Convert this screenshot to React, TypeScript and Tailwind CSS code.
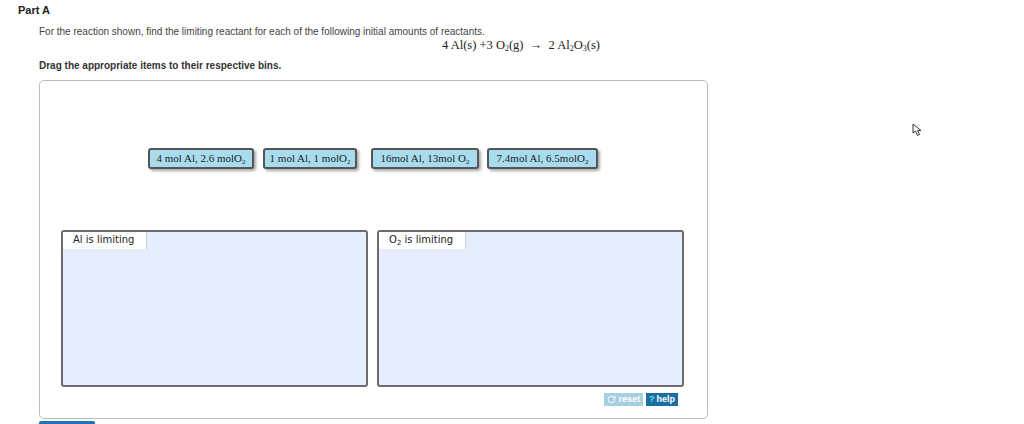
import { RotateCw } from "lucide-react";

const serif = "font-['Liberation_Serif','DejaVu_Serif',serif]";

const items = [
  { key: "a", el: <>4 mol Al, 2.6 molO<sub className="text-[7px]">2</sub></>, cls: "w-[106px]" },
  { key: "b", el: <>1 mol Al, 1 molO<sub className="text-[7px]">2</sub></>, cls: "ml-[9px] w-[94px]" },
  { key: "c", el: <>16mol Al, 13mol O<sub className="text-[7px]">2</sub></>, cls: "ml-[14px] w-[108px]" },
  { key: "d", el: <>7.4mol Al, 6.5molO<sub className="text-[7px]">2</sub></>, cls: "ml-[8px] w-[111px]" },
];

function Bin({ label }: { label: React.ReactNode }) {
  return (
    <div className="h-[157px] flex-1 rounded-[3px] border-2 border-[#6b6b6b] bg-[#e6edfc]">
      <div className="w-fit border-r border-[#cfcfcf] bg-white pb-[2px] pl-[10px] pr-[12px] pt-[1px] text-[10px] leading-[14px] text-[#222] font-['DejaVu_Sans',sans-serif]">
        {label}
      </div>
    </div>
  );
}

export default function App() {
  return (
    <div className="relative h-[424px] w-[1024px] overflow-hidden bg-white font-['Liberation_Sans',Arial,sans-serif] text-[#333]">
      <div className="pl-[18px] pt-[4px] text-[11px] font-bold leading-[12px] text-[#222]">Part A</div>

      <div className="pl-[39px] pt-[10px]">
        <p className="text-[10px] leading-[12px] text-[#444]">
          For the reaction shown, find the limiting reactant for each of the following initial amounts of reactants.
        </p>
        <p className={`ml-[403px] text-[12.5px] leading-[14px] text-[#222] ${serif}`}>
          4 Al(s) +3 O<sub className="text-[8px]">2</sub>(g) &nbsp;→&nbsp; 2 Al<sub className="text-[8px]">2</sub>O<sub className="text-[8px]">3</sub>(s)
        </p>
        <p className="mt-[8px] text-[10px] font-bold leading-[12px] text-[#333]">Drag the appropriate items to their respective bins.</p>

        <div className="mt-[8px] flex h-[339px] w-[669px] flex-col rounded-[5px] border border-[#bdbdbd] px-[21px] pt-[67px]">
          <div className="flex pl-[87px]">
            {items.map((it) => (
              <div
                key={it.key}
                className={`${it.cls} flex h-[21px] shrink-0 items-center justify-center rounded-[3px] border-2 border-[#555] bg-[#a9dbee] text-[11px] leading-none text-[#222] shadow-[2px_2px_3px_rgba(0,0,0,0.35)] ${serif}`}
              >
                <span className="whitespace-nowrap">{it.el}</span>
              </div>
            ))}
          </div>

          <div className="mt-[61px] flex gap-[9px] pr-[2px]">
            <Bin label="Al is limiting" />
            <Bin label={<>O<sub className="text-[7px]">2</sub> is limiting</>} />
          </div>

          <div className="mt-[6px] flex justify-end gap-[3px] pr-[8px]">
            <div className="flex h-[13px] items-center gap-[2px] bg-[#a6cfe3] px-[3px] text-[9px] font-bold text-white">
              <RotateCw size={9} strokeWidth={2.5} />
              reset
            </div>
            <div className="flex h-[13px] items-center gap-[2px] bg-[#1a6ea4] px-[3px] text-[9px] font-bold text-white">
              <span className="text-[#6ee0d0]">?</span>
              help
            </div>
          </div>
        </div>

        <div className="mt-[2px] h-[4px] w-[56px] rounded-t-[2px] bg-[#1a73b8]" />
      </div>

      {/* mouse pointer */}
      <svg className="absolute left-[912px] top-[123px]" width="12" height="14" viewBox="0 0 12 14">
        <path d="M1 1 L1 10 L3.5 8 L5.5 12.5 L7.5 11.5 L5.5 7.5 L9 7.5 Z" fill="white" stroke="#333" strokeWidth="1" strokeLinejoin="round" />
      </svg>
    </div>
  );
}
